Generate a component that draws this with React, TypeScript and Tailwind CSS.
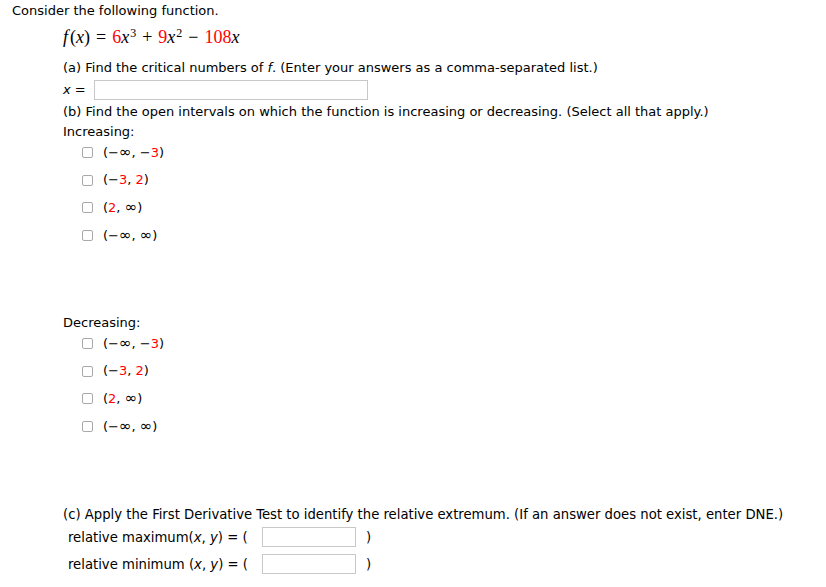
import React from 'react';

const verdana = { fontFamily: '"DejaVu Sans", Verdana, sans-serif' };

function R({ children }: { children: React.ReactNode }) {
  return <span className="text-[#f00]">{children}</span>;
}

function Box() {
  return <span className="inline-block w-[11px] h-[11px] border border-[#a9a9a9] rounded-[2px] bg-white mr-[10px]" />;
}

function Options() {
  const items: React.ReactNode[] = [
    <>(−<span className="text-[15px]">∞</span>, −<R>3</R>)</>,
    <>(−<R>3</R>, <R>2</R>)</>,
    <>(<R>2</R>, <span className="text-[15px]">∞</span>)</>,
    <>(−<span className="text-[15px]">∞</span>, <span className="text-[15px]">∞</span>)</>,
  ];
  return (
    <div className="flex flex-col gap-[10.7px] pl-[19px] pt-[2px]">
      {items.map((it, i) => (
        <label key={i} className="flex items-center h-[17px]">
          <Box />
          <span>{it}</span>
        </label>
      ))}
    </div>
  );
}

export default function App() {
  return (
    <div className="w-[826px] h-[587px] bg-white text-black text-[13px] leading-[20px] pt-[1px] pl-[12px]" style={verdana}>
      <div>Consider the following function.</div>
      <div className="pl-[51px]">
        <div className="h-[30px] pt-[4px] text-[18px] leading-[24px] whitespace-nowrap" style={{ fontFamily: '"Liberation Serif", serif' }}>
          <i>f</i><span className="ml-[2px]">(</span><i>x</i>)
          <span className="mx-[6px]">=</span>
          <R>6</R><i>x</i><sup className="text-[12px] ml-[1px]">3</sup>
          <span className="mx-[6px]">+</span>
          <R>9</R><i>x</i><sup className="text-[12px] ml-[1px]">2</sup>
          <span className="mx-[6px]">−</span>
          <R>108</R><i>x</i>
        </div>
        <div className="mt-[7px]">(a) Find the critical numbers of <i>f</i>. (Enter your answers as a comma-separated list.)</div>
        <div className="flex items-center mt-[1px] h-[22px]">
          <span className="w-[31px]"><i>x</i> =</span>
          <input className="w-[274px] h-[20px] border border-[#c8c8c8] outline-none" />
        </div>
        <div className="mt-[1px]">(b) Find the open intervals on which the function is increasing or decreasing. (Select all that apply.)</div>
        <div>Increasing:</div>
        <Options />
        <div className="mt-[69px]">Decreasing:</div>
        <Options />
        <div className="mt-[69px] text-[14.7px]" style={{ fontFamily: '"DejaVu Sans Condensed", Tahoma, sans-serif' }}>
          <div className="whitespace-nowrap">(c) Apply the First Derivative Test to identify the relative extremum. (If an answer does not exist, enter DNE.)</div>
          <div className="flex flex-col gap-[6px] pl-[5px] mt-[2px]">
            <div className="flex items-center h-[21px]">
              <span className="w-[194px] whitespace-nowrap">relative maximum(<i>x</i>, <i>y</i>) = (</span>
              <input className="w-[94px] h-[20px] border border-[#c8c8c8] outline-none" />
              <span className="ml-[10px]">)</span>
            </div>
            <div className="flex items-center h-[21px]">
              <span className="w-[194px] whitespace-nowrap">relative minimum (<i>x</i>, <i>y</i>) = (</span>
              <input className="w-[94px] h-[20px] border border-[#c8c8c8] outline-none" />
              <span className="ml-[10px]">)</span>
            </div>
          </div>
        </div>
      </div>
    </div>
  );
}
